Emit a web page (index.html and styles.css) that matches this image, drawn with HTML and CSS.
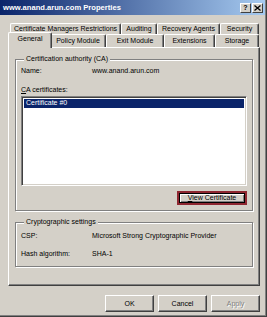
FILE: index.html
```html
<!DOCTYPE html>
<html>
<head>
<meta charset="utf-8">
<title>www.anand.arun.com Properties</title>
<link rel="stylesheet" href="styles.css">
</head>
<body>
<div class="window">
  <div class="titlebar">
    <span class="title">www.anand.arun.com Properties</span>
    <span class="caption">
      <span class="cbtn help">?</span>
      <span class="cbtn close">
        <svg width="7" height="6" viewBox="0 0 7 6"><path d="M0.5 0.5 L6.5 5.5 M6.5 0.5 L0.5 5.5" stroke="#000" stroke-width="1.3"/></svg>
      </span>
    </span>
  </div>

  <div class="tabs">
    <div class="tabrow back">
      <span class="tab w-cmr">Certificate Managers Restrictions</span>
      <span class="tab w-aud">Auditing</span>
      <span class="tab w-rec">Recovery Agents</span>
      <span class="tab w-sec">Security</span>
    </div>
    <div class="tabrow front">
      <span class="tab active w-gen">General</span>
      <span class="tab w-pol">Policy Module</span>
      <span class="tab w-exit">Exit Module</span>
      <span class="tab w-ext">Extensions</span>
      <span class="tab w-sto">Storage</span>
    </div>
  </div>

  <div class="panel">
    <fieldset class="group ca">
      <legend>Certification authority (CA)</legend>
      <div class="field">
        <span class="label">Name:</span>
        <span class="value">www.anand.arun.com</span>
      </div>
      <div class="listlabel"><u>C</u>A certificates:</div>
      <div class="listbox">
        <div class="item selected">Certificate #0</div>
      </div>
      <div class="btnrow">
        <span class="marked"><button class="btn focus"><u>V</u>iew Certificate</button></span>
      </div>
    </fieldset>

    <fieldset class="group crypto">
      <legend>Cryptographic settings</legend>
      <div class="field">
        <span class="label">CSP:</span>
        <span class="value">Microsoft Strong Cryptographic Provider</span>
      </div>
      <div class="field second">
        <span class="label">Hash algorithm:</span>
        <span class="value">SHA-1</span>
      </div>
    </fieldset>
  </div>

  <div class="footer">
    <button class="btn">OK</button>
    <button class="btn">Cancel</button>
    <button class="btn disabled">Apply</button>
  </div>
</div>
</body>
</html>
```

FILE: styles.css
```css
* {
  box-sizing: border-box;
}

body {
  margin: 0;
  background-color: #d4d0c8;
  font-family: "Liberation Sans", Arial, sans-serif;
  font-size: 7px;
  line-height: 8px;
  color: #000;
}

.window {
  width: 267px;
  height: 317px;
  border-right: 1px solid #404040;
  border-bottom: 1px solid #404040;
  box-shadow: inset -1px -1px 0 #808080;
}

/* title bar */
.titlebar {
  display: flex;
  align-items: center;
  height: 15px;
  width: 265px;
  padding: 0 2px 0 3px;
  background: linear-gradient(to right, #0a246a, #a6caf0);
}

.title {
  flex: 1;
  color: #fff;
  font-weight: bold;
  font-size: 7.6px;
}

.caption {
  display: flex;
  gap: 1px;
}

.cbtn {
  display: flex;
  align-items: center;
  justify-content: center;
  width: 11px;
  height: 10px;
  background: #d4d0c8;
  border-top: 1px solid #fff;
  border-left: 1px solid #fff;
  border-right: 1px solid #404040;
  border-bottom: 1px solid #404040;
  font-weight: bold;
  font-size: 7px;
  line-height: 8px;
}

/* tabs */
.tabs {
  margin: 8px 6px 0 10px;
}

.tabrow {
  display: flex;
}

.tab {
  text-align: center;
  white-space: nowrap;
  background: #d4d0c8;
  border-top: 1px solid #fff;
  border-left: 1px solid #fff;
  border-right: 1px solid #404040;
  box-shadow: inset -1px 0 0 #808080;
  border-radius: 2px 2px 0 0;
}

.back .tab {
  height: 11px;
  padding-top: 1px;
}

.front .tab {
  height: 13px;
  padding-top: 2px;
}

.front .tab.active {
  position: relative;
  z-index: 1;
  height: 16px;
  margin: -2px -2px -1px -2px;
  padding-top: 2px;
}

.w-cmr { width: 111px; }
.w-aud { width: 36px; }
.w-rec { width: 63px; }
.w-sec { width: 39px; }
.w-gen { width: 44px; }
.w-pol { width: 56px; }
.w-exit { width: 58px; }
.w-ext { width: 51px; }
.w-sto { width: 44px; }

/* tab page */
.panel {
  margin: 0 6px 0 8px;
  height: 239px;
  padding: 7px 6px 0 6px;
  border-top: 1px solid #fff;
  border-left: 1px solid #fff;
  border-right: 1px solid #404040;
  border-bottom: 1px solid #404040;
  box-shadow: inset -1px -1px 0 #808080;
}

.group {
  margin: 0;
  min-width: 0;
  padding: 4px 5px 5px 5px;
  border: 1px solid #808080;
  box-shadow: inset 1px 1px 0 #fff, 1px 1px 0 #fff;
}

.group legend {
  padding: 0 2px;
  margin-left: 3px;
  background: #d4d0c8;
  line-height: 8px;
}

.field {
  display: flex;
}

.label {
  width: 71px;
}

.listlabel {
  margin-top: 11px;
}

.listbox {
  margin-top: 2px;
  height: 90px;
  background: #fff;
  border-top: 1px solid #808080;
  border-left: 1px solid #808080;
  border-right: 1px solid #fff;
  border-bottom: 1px solid #fff;
  box-shadow: inset 1px 1px 0 #404040, inset -1px -1px 0 #d4d0c8;
  padding: 2px;
}

.item {
  height: 9px;
  padding-left: 2px;
}

.item.selected {
  background: #0a246a;
  color: #fff;
}

.btnrow {
  display: flex;
  justify-content: flex-end;
  margin-top: 5px;
}

.marked {
  border: 2px solid #8e2630;
}

.btn {
  display: block;
  font-family: inherit;
  font-size: 7px;
  line-height: 8px;
  color: #000;
  padding: 0;
  margin: 0;
  background: #d4d0c8;
  border-top: 1px solid #fff;
  border-left: 1px solid #fff;
  border-right: 1px solid #404040;
  border-bottom: 1px solid #404040;
  box-shadow: inset -1px -1px 0 #808080;
  border-radius: 0;
}

.btn.focus {
  width: 66px;
  height: 10px;
  border: 1px solid #000;
  box-shadow: inset 1px 1px 0 #fff, inset -1px -1px 0 #808080;
}

.crypto {
  margin-top: 7px;
  padding-top: 6px;
  padding-bottom: 8px;
}

.field.second {
  margin-top: 10px;
}

/* dialog buttons */
.footer {
  display: flex;
  justify-content: flex-end;
  gap: 4px;
  margin: 9px 6px 0 0;
}

.footer .btn {
  width: 49px;
  height: 17px;
}

.btn.disabled {
  color: #808080;
  text-shadow: 1px 1px 0 #fff;
}
```
